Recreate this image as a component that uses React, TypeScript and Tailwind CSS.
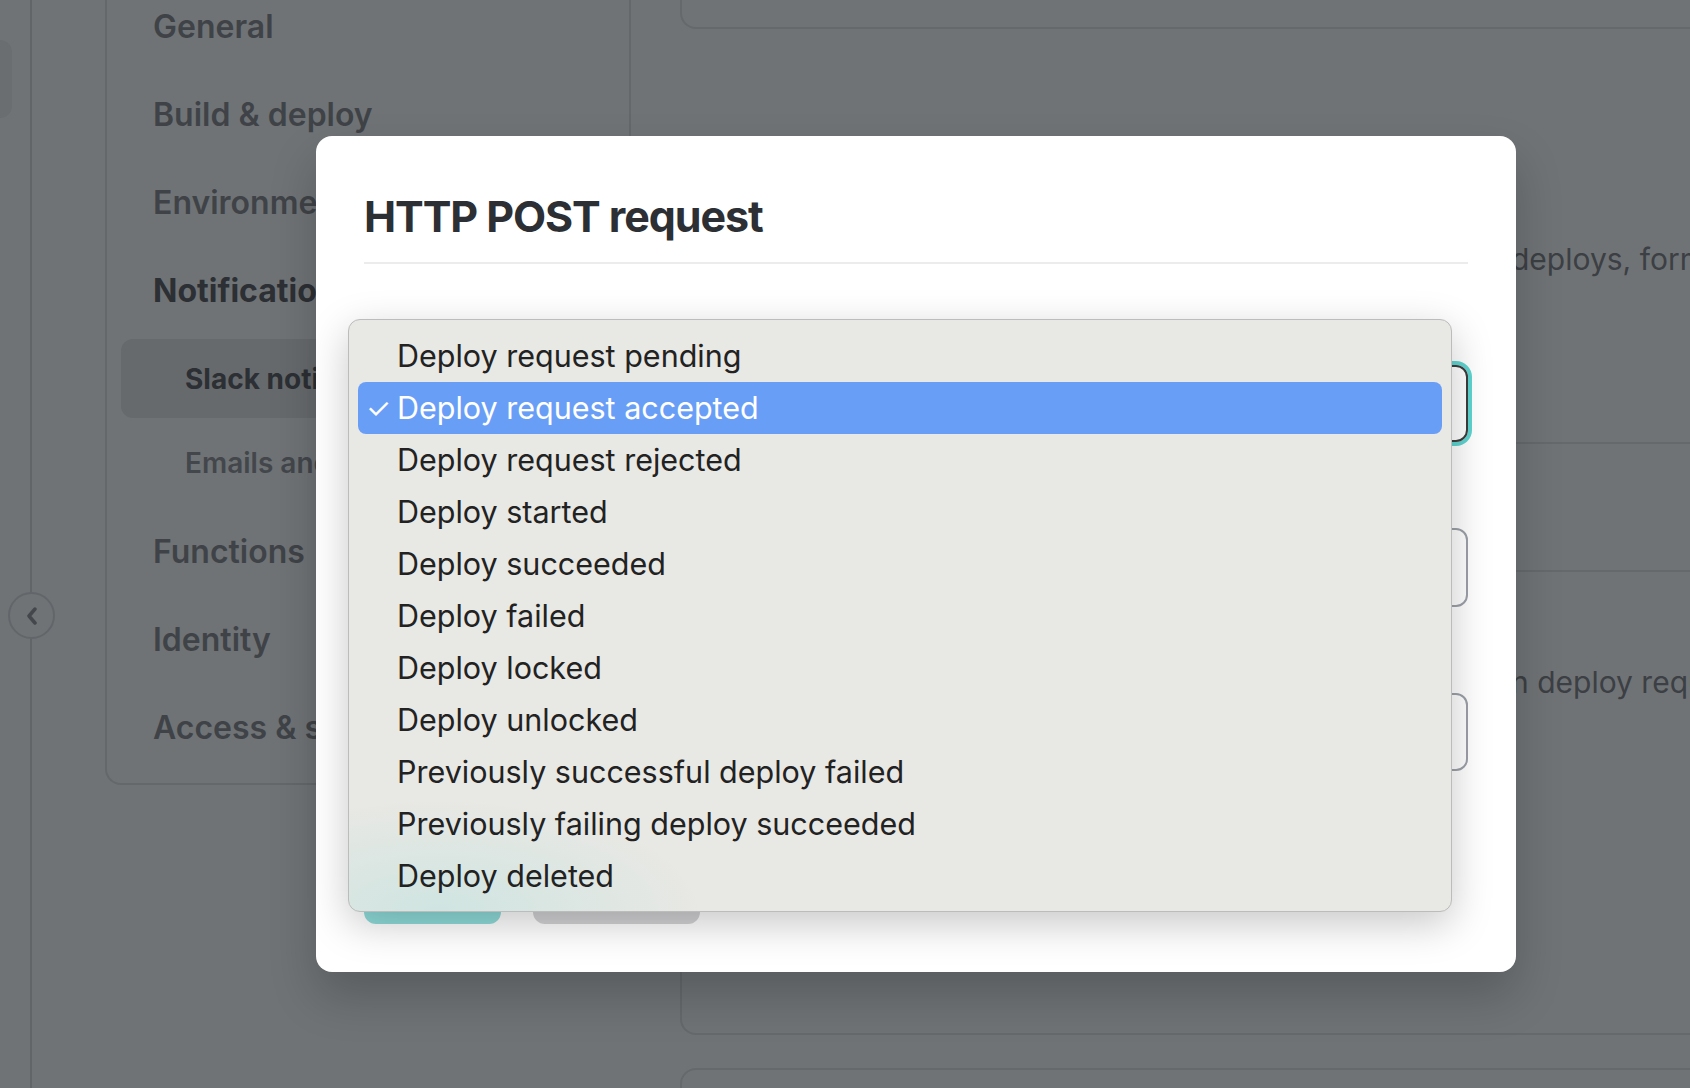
import React from "react";

const navTop = ["General", "Build & deploy", "Environment variables", "Notifications"];
const navBottom = ["Functions", "Identity", "Access & security"];

const events = [
  "Deploy request pending",
  "Deploy request accepted",
  "Deploy request rejected",
  "Deploy started",
  "Deploy succeeded",
  "Deploy failed",
  "Deploy locked",
  "Deploy unlocked",
  "Previously successful deploy failed",
  "Previously failing deploy succeeded",
  "Deploy deleted",
];

function Sidebar() {
  return (
    <aside className="-mt-[17px] ml-[73px] w-[526px] shrink-0 self-start rounded-b-2xl border-2 border-t-0 border-[#64686b] px-[14px] pb-[11px]">
      {navTop.map((item) => (
        <div
          key={item}
          className={`flex h-[88px] items-center whitespace-nowrap pl-[32px] text-[32px] ${
            item === "Notifications" ? "font-bold text-[#2c2f33]" : "font-semibold text-[#3f4347]"
          }`}
        >
          {item}
        </div>
      ))}
      <div className="flex flex-col gap-[5px] pt-[4px] pb-[6px]">
        <div className="flex h-[79px] items-center whitespace-nowrap rounded-xl bg-[#676a6d] pl-[64px] text-[28px] font-bold text-[#2c2f33]">
          Slack notifications
        </div>
        <div className="flex h-[79px] items-center whitespace-nowrap pl-[64px] text-[28px] font-semibold text-[#43474b]">
          Emails and webhooks
        </div>
      </div>
      {navBottom.map((item) => (
        <div
          key={item}
          className="flex h-[88px] items-center whitespace-nowrap pl-[32px] text-[32px] font-semibold text-[#3f4347]"
        >
          {item}
        </div>
      ))}
    </aside>
  );
}

function MainColumn() {
  return (
    <main className="ml-[49px] flex w-[1100px] shrink-0 flex-col text-[#3c3f43]">
      <div className="h-[29px] shrink-0 rounded-b-2xl border-2 border-t-0 border-[#66696c]" />
      {/* card continues under the dialog; its top edge is hidden */}
      <section className="mt-[121px] flex h-[885px] shrink-0 flex-col rounded-b-2xl border-2 border-t-0 border-[#66696c]">
        <div className="h-[294px] shrink-0 border-b-2 border-[#66696c] pt-[89px]">
          <p className="whitespace-nowrap pl-[829px] text-[30px] leading-[40px]">deploys, form submissions and more.</p>
        </div>
        <div className="h-[128px] shrink-0 border-b-2 border-[#66696c]" />
        <div className="flex-1 pt-[90px]">
          <p className="whitespace-nowrap pl-[829px] text-[30px] leading-[40px]">n deploy requests are created or reviewed.</p>
        </div>
      </section>
      <div className="mt-[33px] h-[200px] shrink-0 rounded-t-2xl border-2 border-[#66696c]" />
    </main>
  );
}

function EventMenu() {
  return (
    <div className="absolute left-[32px] top-[183px] w-[1104px] rounded-xl border border-[#bcbcbc] bg-[#e8e8e4] bg-[radial-gradient(ellipse_260px_110px_at_90px_100%,rgba(143,220,218,0.28),transparent)] px-[9px] pt-[10px] pb-[9px] shadow-[0_12px_40px_rgba(0,0,0,0.22)]">
      {events.map((ev) => {
        const selected = ev === "Deploy request accepted";
        return (
          <div
            key={ev}
            className={`flex h-[52px] items-center rounded-lg pl-[8px] text-[30.5px] ${
              selected ? "bg-[#699ef7] text-white" : "text-[#222222]"
            }`}
          >
            <span className="w-[31px] text-[28px] font-normal">{selected ? "✓" : ""}</span>
            <span>{ev}</span>
          </div>
        );
      })}
    </div>
  );
}

function Dialog() {
  return (
    <div className="absolute left-[316px] top-[136px] w-[1200px] rounded-2xl bg-white px-[48px] pt-[54px] pb-[48px] shadow-[0_24px_48px_rgba(0,0,0,0.2)]">
      <h1 className="border-b-2 border-[#ececec] pb-[19px] text-[43px] font-bold leading-[53px] tracking-[-0.025em] text-[#2c2f33]">
        HTTP POST request
      </h1>
      {/* form fields sit under the open event menu */}
      <div className="pt-[101px]">
        <div className="flex h-[77px] items-center rounded-xl border-2 border-[#3d3d3d] ring-4 ring-[#5fd4d0]" />
        <div className="mt-[86px] h-[79px] rounded-xl border-2 border-[#9ca0a8]" />
        <div className="mt-[86px] h-[78px] rounded-xl border-2 border-[#9ca0a8]" />
        <div className="mt-[73px] flex gap-[32px]">
          <button className="h-[80px] w-[137px] rounded-xl bg-[#8fdcda]" />
          <button className="h-[80px] w-[167px] rounded-xl bg-[#d3d3d5]" />
        </div>
      </div>
      <EventMenu />
    </div>
  );
}

export default function App() {
  return (
    <div className="relative h-screen w-full overflow-hidden bg-[#6f7376] font-['Inter',sans-serif]">
      <div className="flex h-full">
        <div className="relative w-[32px] shrink-0 border-r-2 border-[#616568]">
          <div className="mt-[40px] h-[78px] w-[12px] rounded-r-xl bg-[#6a6e71]" />
          <button className="absolute left-[8px] top-[592px] flex h-[47px] w-[47px] items-center justify-center rounded-full border-2 border-[#62666a] bg-[#6f7376]">
            <svg width="12" height="18" viewBox="0 0 12 18" fill="none">
              <polyline points="9,2 3,9 9,16" stroke="#44484c" strokeWidth="3.5" strokeLinecap="round" strokeLinejoin="round" />
            </svg>
          </button>
        </div>
        <Sidebar />
        <MainColumn />
      </div>
      <Dialog />
    </div>
  );
}
